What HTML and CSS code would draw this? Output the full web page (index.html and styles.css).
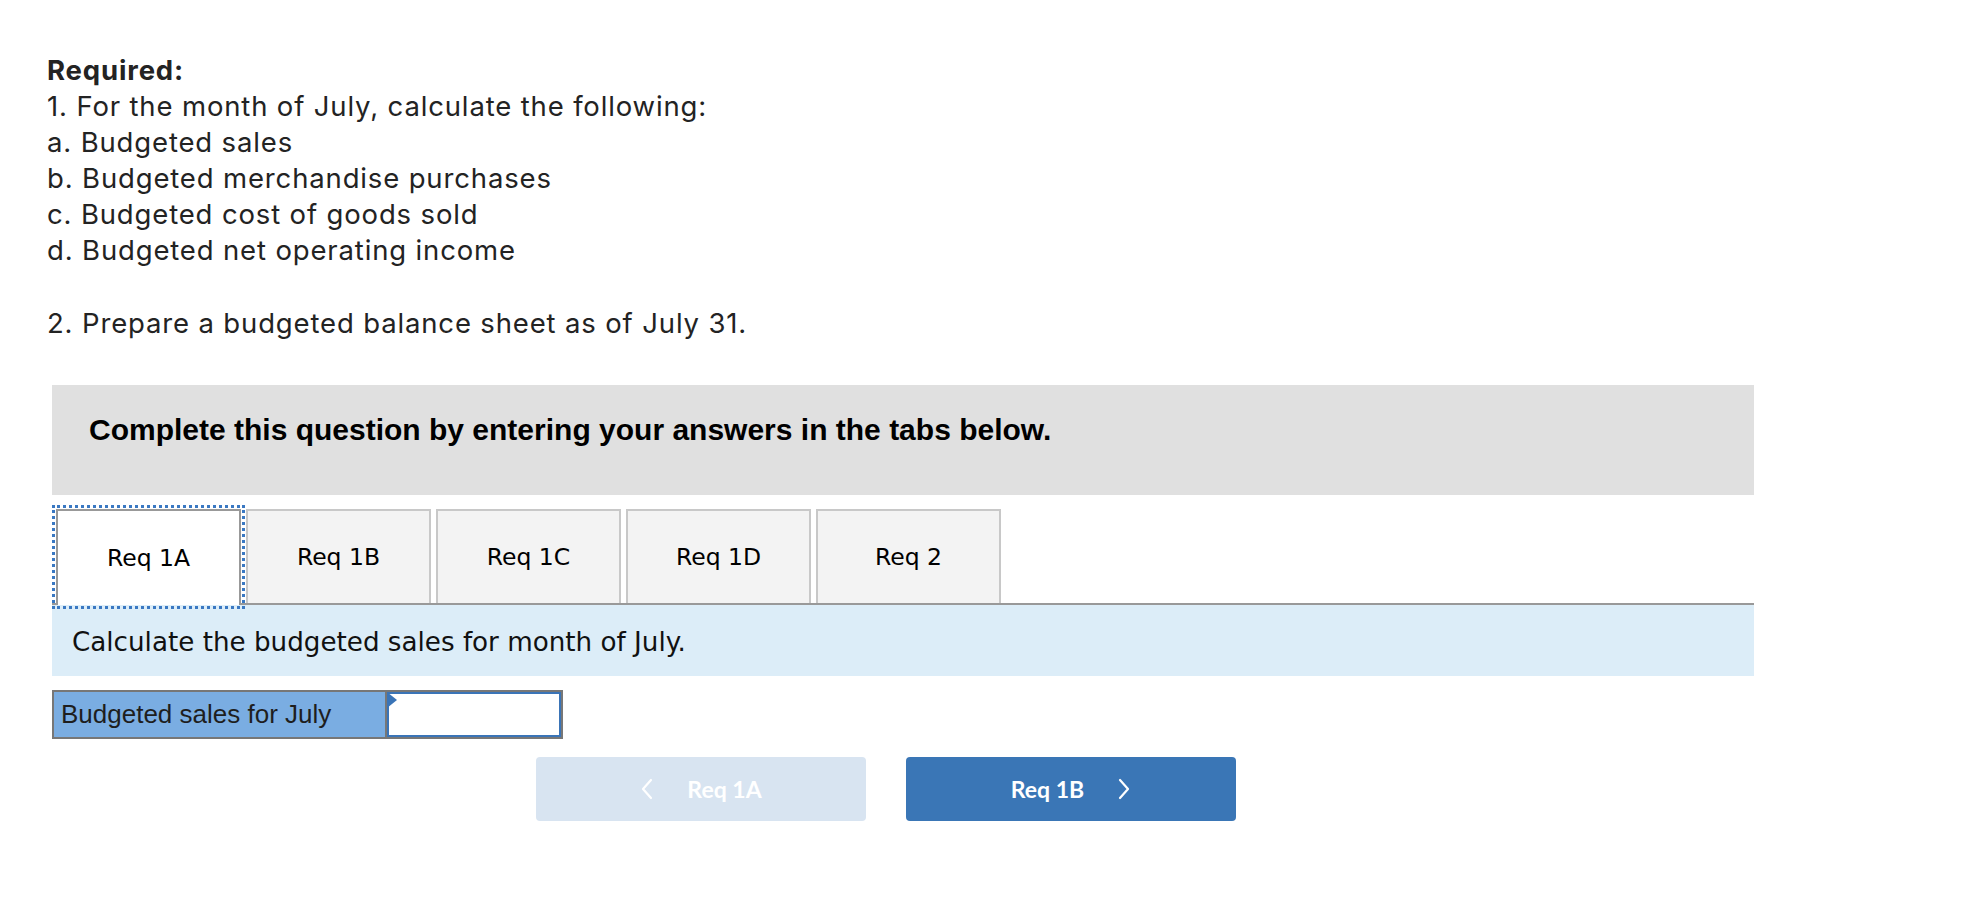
FILE: index.html
```html
<!DOCTYPE html>
<html lang="en">
<head>
<meta charset="utf-8">
<title>Required</title>
<link rel="stylesheet" href="styles.css">
</head>
<body>
<div class="page">
  <p class="required">
    <strong>Required:</strong><br>
    1. For the month of July, calculate the following:<br>
    a. Budgeted sales<br>
    b. Budgeted merchandise purchases<br>
    c. Budgeted cost of goods sold<br>
    d. Budgeted net operating income<br>
    <br>
    2. Prepare a budgeted balance sheet as of July 31.
  </p>

  <div class="panel">
    <div class="banner">Complete this question by entering your answers in the tabs below.</div>

    <div class="tabs">
      <div class="tab active">Req 1A</div>
      <div class="tab">Req 1B</div>
      <div class="tab">Req 1C</div>
      <div class="tab">Req 1D</div>
      <div class="tab">Req 2</div>
    </div>

    <div class="instr">Calculate the budgeted sales for month of July.</div>

    <div class="answer-row">
      <div class="answer-label">Budgeted sales for July</div>
      <div class="answer-input">
        <span class="marker"></span>
        <input class="field" type="text" aria-label="Budgeted sales for July">
      </div>
    </div>

    <div class="nav">
      <button class="navbtn prev" type="button">
        <svg class="chev" width="14" height="22" viewBox="0 0 14 22"><polyline points="11,2 3,11 11,20" fill="none" stroke="#ffffff" stroke-width="2.2" stroke-linecap="round" stroke-linejoin="round"/></svg>
        <span>Req 1A</span>
      </button>
      <button class="navbtn next" type="button">
        <span>Req 1B</span>
        <svg class="chev" width="14" height="22" viewBox="0 0 14 22"><polyline points="3,2 11,11 3,20" fill="none" stroke="#ffffff" stroke-width="2.2" stroke-linecap="round" stroke-linejoin="round"/></svg>
      </button>
    </div>
  </div>
</div>
</body>
</html>
```

FILE: styles.css
```css
* {
  box-sizing: border-box;
}

html, body {
  margin: 0;
  padding: 0;
  background: #ffffff;
}

.page {
  padding: 52px 0 40px 0;
}

.required {
  margin: 0;
  padding-left: 47px;
  font-family: Inter, Lato, sans-serif;
  font-size: 27.5px;
  letter-spacing: 0.85px;
  line-height: 36.1px;
  color: #232323;
}

.required strong {
  font-weight: 700;
}

.panel {
  margin: 44px 0 0 52px;
  width: 1702px;
}

.banner {
  height: 110px;
  background: #e0e0e0;
  padding: 27px 0 0 37px;
  font-family: "Liberation Sans", Arial, sans-serif;
  font-weight: 700;
  font-size: 30px;
  line-height: 36px;
  color: #000000;
}

.tabs {
  margin-top: 14px;
  display: flex;
  gap: 5px;
  padding-left: 4px;
  border-bottom: 2px solid #999999;
  height: 96px;
}

.tab {
  width: 185px;
  height: 94px;
  display: flex;
  align-items: center;
  justify-content: center;
  background: #f3f3f3;
  border: 2px solid #c8c8c8;
  border-bottom: none;
  font-family: "DejaVu Sans", Verdana, sans-serif;
  font-size: 23.5px;
  color: #000000;
}

.tab.active {
  height: 96px;
  margin-bottom: -2px;
  background: #ffffff;
  border-color: #999999;
  outline: 3px dotted #3a78c2;
  outline-offset: 1px;
}

.instr {
  height: 71px;
  background: #dcedf8;
  padding: 3px 0 0 20px;
  display: flex;
  align-items: center;
  font-family: "DejaVu Sans", Verdana, sans-serif;
  font-size: 26.2px;
  color: #111111;
}

.answer-row {
  margin-top: 14px;
  width: 511px;
  height: 49px;
  display: flex;
  border: 2px solid #777777;
}

.answer-label {
  width: 333px;
  background: #7aade2;
  border-right: 2px solid #777777;
  padding-left: 7px;
  display: flex;
  align-items: center;
  font-family: "Liberation Sans", Arial, sans-serif;
  font-size: 26px;
  color: #1e1e1e;
}

.answer-input {
  flex: 1;
  position: relative;
  border: 2px solid #3a74b7;
  background: #ffffff;
}

.field {
  width: 100%;
  height: 100%;
  border: none;
  outline: none;
  background: transparent;
  padding: 0 6px;
  font-family: "Liberation Sans", Arial, sans-serif;
  font-size: 24px;
}

.marker {
  position: absolute;
  left: -2px;
  top: -2px;
  width: 0;
  height: 0;
  border-top: 8px solid transparent;
  border-bottom: 8px solid transparent;
  border-left: 10px solid #3a74b7;
}

.nav {
  margin-top: 18px;
  padding-left: 484px;
  display: flex;
  gap: 40px;
}

.navbtn {
  width: 330px;
  height: 64px;
  border: none;
  border-radius: 4px;
  display: flex;
  align-items: center;
  justify-content: center;
  gap: 33px;
  font-family: Lato, "Open Sans", sans-serif;
  font-weight: 700;
  font-size: 23px;
  color: #ffffff;
  padding: 0;
}

.navbtn.prev {
  background: #d8e4f1;
}

.navbtn.next {
  background: #3a76b6;
}

.chev {
  display: block;
}
```
